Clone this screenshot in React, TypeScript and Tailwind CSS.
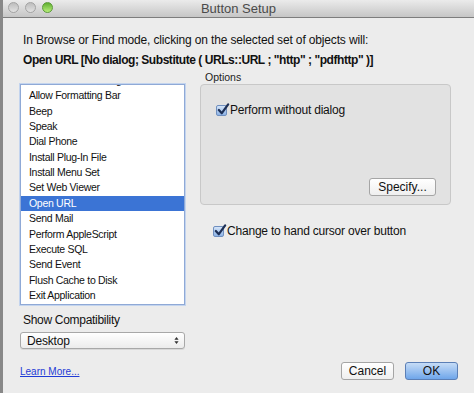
import React from "react";

const items = [
  "Show Custom Dialog",
  "Allow Formatting Bar",
  "Beep",
  "Speak",
  "Dial Phone",
  "Install Plug-In File",
  "Install Menu Set",
  "Set Web Viewer",
  "Open URL",
  "Send Mail",
  "Perform AppleScript",
  "Execute SQL",
  "Send Event",
  "Flush Cache to Disk",
  "Exit Application",
];

function Check() {
  return (
    <span className="relative inline-block w-[11px] h-[11px] rounded-[2px] border border-[#6f8fbf] bg-gradient-to-b from-[#d4e4f8] to-[#8db3e6] shrink-0">
      <svg viewBox="0 0 14 14" className="absolute left-[0px] top-[-3px] w-[13px] h-[13px]">
        <path d="M2 7.5 L5.2 11 L12 1.5" fill="none" stroke="#1d2f55" strokeWidth="2.4" strokeLinecap="round" strokeLinejoin="round" />
      </svg>
    </span>
  );
}

export default function App() {
  return (
    <div
      className="w-[474px] h-[393px] overflow-hidden bg-[#888] flex"
      style={{ fontFamily: '"Liberation Sans", Arial, sans-serif' }}
    >
      <div className="ml-[3px] flex-1 flex flex-col bg-[#ececec] text-[#111]">
        {/* title bar */}
        <div className="relative h-[18px] shrink-0 bg-gradient-to-b from-[#ebebeb] to-[#c6c6c6] border-b border-[#7d7d7d] flex items-center justify-center">
          <div className="absolute left-[5px] top-[2px] flex gap-[6px]">
            <span className="w-[11px] h-[11px] rounded-full bg-gradient-to-b from-[#bdbdbd] to-[#e2e2e2] border border-[#a3a3a3]" />
            <span className="w-[11px] h-[11px] rounded-full bg-gradient-to-b from-[#bdbdbd] to-[#e2e2e2] border border-[#a3a3a3]" />
            <span className="w-[11px] h-[11px] rounded-full bg-gradient-to-b from-[#5fae2e] to-[#b8f07a] border border-[#5c9a3a]" />
          </div>
          <span className="text-[13px] text-[#4a4a4a] leading-none">Button Setup</span>
        </div>

        <div className="pl-[20px] pr-[16px] flex flex-col flex-1">
          <div className="mt-[15px] text-[12px] tracking-[-0.15px] leading-[14px] whitespace-nowrap">
            In Browse or Find mode, clicking on the selected set of objects will:
          </div>
          <div className="mt-[6px] text-[12px] tracking-[-0.45px] leading-[14px] font-bold whitespace-nowrap">
            Open URL [No dialog; Substitute ( URLs::URL ; "http" ; "pdfhttp" )]
          </div>

          <div className="flex mt-[3px]">
            {/* left column */}
            <div className="w-[165px] ml-[-3px] pt-[14px] flex flex-col">
              <div className="h-[221px] bg-white border border-[#8fa9d6] shadow-[0_0_0_1px_#c3d4ee] overflow-hidden">
                <div className="mt-[-12px]">
                  {items.map((it) => (
                    <div
                      key={it}
                      className={
                        "h-[15.38px] flex items-center pl-[8px] text-[10.5px] tracking-[-0.3px] whitespace-nowrap " +
                        (it === "Open URL" ? "bg-[#3b74d5] text-white" : "text-[#111]")
                      }
                    >
                      {it}
                    </div>
                  ))}
                </div>
              </div>
              <div className="mt-[8px] ml-[3px] text-[12px] tracking-[-0.3px] leading-[14px]">Show Compatibility</div>
              <div className="mt-[5px] h-[17px] rounded-[3px] border border-[#a8a8a8] bg-gradient-to-b from-[#ffffff] to-[#ececec] shadow-[0_1px_0_#d8d8d8] flex items-center justify-between pl-[6px] pr-[5px]">
                <span className="text-[12px] tracking-[-0.2px] leading-none">Desktop</span>
                <svg viewBox="0 0 6 10" className="w-[5px] h-[9px]">
                  <path d="M0.5 4 L3 0.8 L5.5 4 Z M0.5 6 L3 9.2 L5.5 6 Z" fill="#333" />
                </svg>
              </div>
            </div>

            {/* right column */}
            <div className="ml-[15px] w-[251px] flex flex-col">
              <div className="pl-[5px] h-[14px] text-[10.5px] leading-[14px] text-[#222]">Options</div>
              <div className="h-[121px] rounded-[4px] border border-[#c8c8c8] bg-[#e2e2e2] flex flex-col">
                <div className="mt-[18px] ml-[15px] flex items-center gap-[3px]">
                  <Check />
                  <span className="text-[12px] tracking-[-0.2px] leading-[14px]">Perform without dialog</span>
                </div>
                <div className="mt-auto mb-[8px] mr-[14px] self-end w-[67px] h-[18px] rounded-[3px] border border-[#a5a5a5] bg-gradient-to-b from-[#ffffff] to-[#efefef] flex items-center justify-center text-[12px]">
                  Specify...
                </div>
              </div>
              <div className="mt-[19px] ml-[13px] flex items-center gap-[3px]">
                <Check />
                <span className="text-[12px] tracking-[-0.2px] leading-[14px]">Change to hand cursor over button</span>
              </div>
            </div>
          </div>

          <div className="mt-auto mb-[13px] flex items-center">
            <span className="ml-[-3px] text-[10px] text-[#1f3bd6] underline">Learn More...</span>
            <div className="ml-auto flex gap-[11px]">
              <div className="w-[53px] h-[18px] rounded-[3px] border border-[#a5a5a5] bg-gradient-to-b from-[#ffffff] to-[#efefef] flex items-center justify-center text-[12px]">
                Cancel
              </div>
              <div className="w-[53px] h-[18px] rounded-[3px] border border-[#5b7fb6] bg-gradient-to-b from-[#c6dcf6] to-[#6fa6ea] flex items-center justify-center text-[12px]">
                OK
              </div>
            </div>
          </div>
        </div>
      </div>
    </div>
  );
}
